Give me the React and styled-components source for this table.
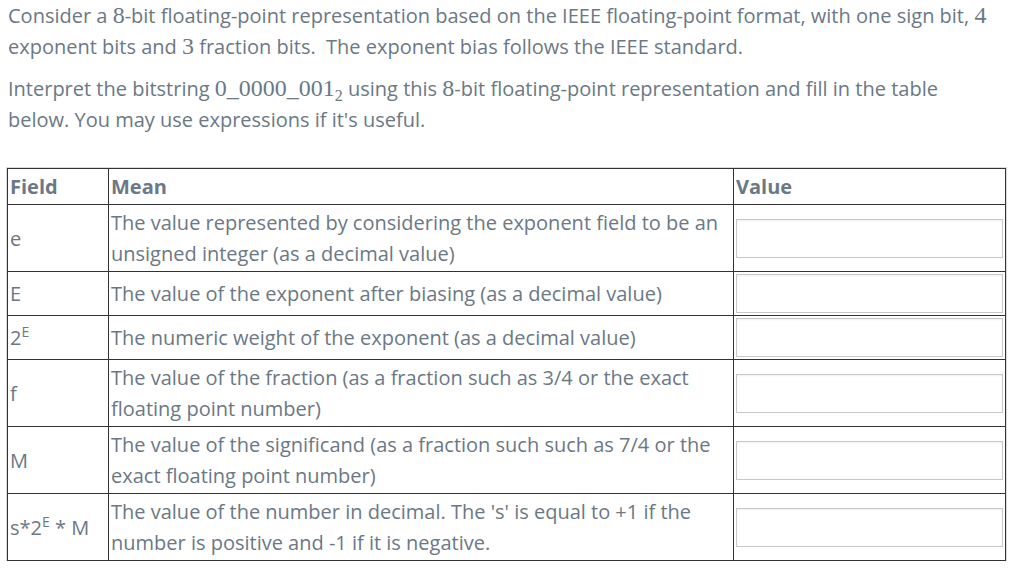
import styled, { createGlobalStyle } from "styled-components";

const Global = createGlobalStyle`
  body {
    margin: 0;
    background: #fff;
    font-family: "Open Sans", "Liberation Sans", sans-serif;
    color: #6b7885;
  }
`;

const Page = styled.div`
  padding: 0 0 0 8px;
`;

const Para = styled.p`
  margin: 0 0 11px;
  max-width: 985px;
  font-size: 20px;
  line-height: 31px;
`;

const Math = styled.span`
  font-family: "Liberation Serif", "DejaVu Serif", serif;
  font-size: 24px;
  line-height: 0;
`;

const Sub = styled.sub`
  font-size: 16px;
  vertical-align: -5px;
  line-height: 0;
`;

const Table = styled.table`
  margin-top: 33px;
  margin-left: -1px;
  width: 999px;
  border-collapse: collapse;
  box-shadow: 0 0 0 1px #dcdcdc;
  font-size: 20px;
  line-height: 31px;
`;

const Cell = styled.td`
  border: 1px solid #333;
  padding: 2px;
  vertical-align: middle;
  width: ${(p) => p.$w || "auto"};
`;

const Head = styled(Cell).attrs({ as: "th" })`
  text-align: left;
  font-weight: 700;
`;

const Input = styled.input`
  display: block;
  box-sizing: border-box;
  width: 100%;
  height: 39px;
  margin: 0;
  border: 1px solid #c8c8c8;
  box-shadow: inset 0 1px 2px rgba(0, 0, 0, 0.06);
  background: #fff;
  font: inherit;
`;

const Sup = styled.sup`
  font-size: 14px;
  vertical-align: 8px;
  line-height: 0;
`;

const rows = [
  {
    field: "e",
    mean: "The value represented by considering the exponent field to be an unsigned integer (as a decimal value)",
  },
  { field: "E", mean: "The value of the exponent after biasing (as a decimal value)" },
  {
    field: (
      <>
        2<Sup>E</Sup>
      </>
    ),
    mean: "The numeric weight of the exponent (as a decimal value)",
  },
  {
    field: "f",
    mean: "The value of the fraction (as a fraction such as 3/4 or the exact floating point number)",
  },
  {
    field: "M",
    mean: "The value of the significand (as a fraction such such as 7/4 or the exact floating point number)",
  },
  {
    field: (
      <>
        s*2<Sup>E</Sup> * M
      </>
    ),
    mean: "The value of the number in decimal. The 's' is equal to +1 if the number is positive and -1 if it is negative.",
  },
];

export default function App() {
  return (
    <Page>
      <Global />
      <Para>
        Consider a <Math>8</Math>-bit floating-point representation based on the IEEE floating-point
        format, with one sign bit, <Math>4</Math> exponent bits and <Math>3</Math> fraction bits.&nbsp; The
        exponent bias follows the IEEE standard.
      </Para>
      <Para>
        Interpret the bitstring{" "}
        <Math>
          0_0000_001<Sub>2</Sub>
        </Math>{" "}
        using this <Math>8</Math>-bit floating-point representation and fill in the table below. You may use
        expressions if it's useful.
      </Para>
      <Table>
        <thead>
          <tr>
            <Head $w="96px">Field</Head>
            <Head $w="620px">Mean</Head>
            <Head>Value</Head>
          </tr>
        </thead>
        <tbody>
          {rows.map((r, i) => (
            <tr key={i}>
              <Cell>{r.field}</Cell>
              <Cell>{r.mean}</Cell>
              <Cell>
                <Input type="text" />
              </Cell>
            </tr>
          ))}
        </tbody>
      </Table>
    </Page>
  );
}
